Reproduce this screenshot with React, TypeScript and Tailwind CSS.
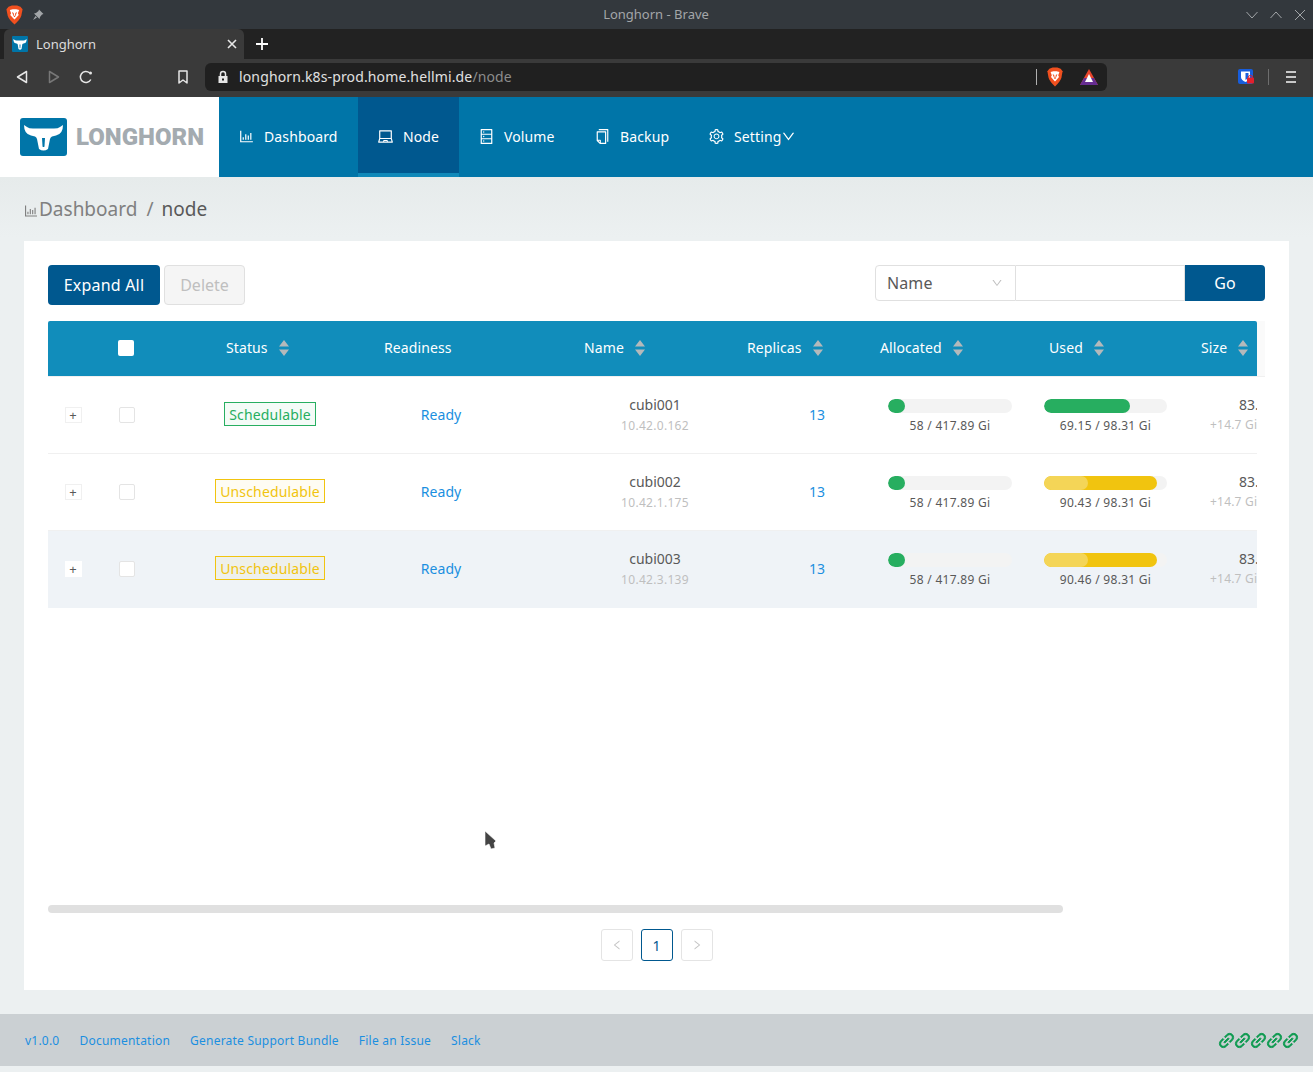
import {
  AiOutlineBarChart,
  AiOutlineLaptop,
  AiOutlineDatabase,
  AiOutlineCopy,
  AiOutlineSetting,
  AiOutlineDown,
  AiOutlineLink,
  AiOutlineLeft,
  AiOutlineRight,
} from 'react-icons/ai'

const BraveIcon = ({ className }: { className?: string }) => (
  <svg viewBox="0 0 20 24" preserveAspectRatio="none" className={className}>
    <path d="M3 2 L7 0.5 H13 L17 2 L19.5 5 L18 13 Q17 17 10 23.5 Q3 17 2 13 L0.5 5 Z" fill="#f1501f" />
    <path d="M4.5 6 L8 5 H12 L15.5 6 L14 10 L15 12 L11.5 16 L10 17.5 L8.5 16 L5 12 L6 10 Z" fill="#fff" />
    <path d="M7 8.5 L9 9.5 L9.5 13 L10.5 13 L11 9.5 L13 8.5 L12 11 L10.5 14.5 H9.5 L8 11 Z" fill="#f1501f" />
  </svg>
)

const BatIcon = () => (
  <svg viewBox="0 0 18 16" className="w-[18px] h-4">
    <path d="M9 0 L18 16 H0 Z" fill="#e8452c" />
    <path d="M0 16 L4 9 H14 L18 16 Z" fill="#662d91" />
    <path d="M9 5 L13 13 H5 Z" fill="#fff" />
  </svg>
)

const BitwardenIcon = () => (
  <svg viewBox="0 0 16 16" className="w-4 h-4">
    <rect width="15" height="15" rx="2" fill="#175ddc" />
    <path d="M3 2.5 H12 V8 Q12 11 7.5 13 Q3 11 3 8 Z" fill="#fff" />
    <path d="M7.5 4 H10.5 V8 Q10.5 9.5 7.5 11 Z" fill="#175ddc" />
    <rect x="9" y="8.5" width="7" height="6" rx="1" fill="#e2202c" />
    <path d="M10.5 8.5 V7.2 Q12.5 5.5 14.5 7.2 V8.5" fill="none" stroke="#e2202c" strokeWidth="1" />
  </svg>
)

const LonghornMark = ({ className }: { className?: string }) => (
  <svg viewBox="0 0 47 38" preserveAspectRatio="none" className={className}>
    <rect width="47" height="38" rx="3" fill="#0075a8" />
    <path d="M4 7 Q4 16 11 17.500 L15 18.500 Q16.500 19 17 21 L19 31 Q23.500 34 28 31 L30 21 Q30.500 19 32 18.500 L36 17.500 Q43 16 43 7 L40 9 Q38 10.500 34 10.500 H13 Q9 10.500 7 9 Z" fill="#fff" />
    <path d="M22 20 H25 L24.500 28.500 Q23.500 29.500 22.500 28.500 Z" fill="#0075a8" />
  </svg>
)

const SortIcon = () => (
  <svg viewBox="0 0 10 16" className="w-[10px] h-4 shrink-0">
    <path d="M5 0 L10 6.500 H0 Z M5 16 L0 9.500 H10 Z" fill="#b4b9bb" />
  </svg>
)

const BrowserChrome = () => (
  <div>
    {/* Title bar */}
    <div className="relative h-[29px] bg-[#33383d] flex items-center pl-[6px] pr-[7px]">
      <BraveIcon className="w-[17px] h-5" />
      <svg viewBox="0 0 12 12" className="w-3 h-3 ml-[9px]">
        <path d="M7 0.500 L11.500 5 L10 5.500 L8 8 L7.500 10 L2 4.500 L4 4 L6.500 2 Z M3.500 7 L1 11 L5 8.500 Z" fill="#a2a5a8" />
      </svg>
      <span className="flex-1 text-center text-[13px] text-[#a3a6a9] pl-[22px]">Longhorn - Brave</span>
      <div className="flex gap-[12px]">
        <svg viewBox="0 0 12 12" className="w-3 h-3" fill="none" stroke="#a2a5a8" strokeWidth="1"><path d="M0.500 3 L6 9 L11.500 3" /></svg>
        <svg viewBox="0 0 12 12" className="w-3 h-3" fill="none" stroke="#a2a5a8" strokeWidth="1"><path d="M0.500 9 L6 3 L11.500 9" /></svg>
        <svg viewBox="0 0 12 12" className="w-3 h-3" fill="none" stroke="#a2a5a8" strokeWidth="1"><path d="M1 1 L11 11 M11 1 L1 11" /></svg>
      </div>
    </div>
    {/* Tab strip */}
    <div className="h-[30px] bg-[#222222] flex items-end pl-1">
      <div className="w-[240px] h-[30px] bg-[#3a3a3a] rounded-t-md flex items-center pl-2 pr-[7px]">
        <LonghornMark className="w-4 h-4" />
        <span className="ml-2 pt-px text-[13px] text-[#dcdcdc] flex-1">Longhorn</span>
        <svg viewBox="0 0 10 10" className="w-[10px] h-[10px]" fill="none" stroke="#e8e8e8" strokeWidth="1.600"><path d="M1 1 L9 9 M9 1 L1 9" /></svg>
      </div>
      <div className="h-[30px] flex items-center ml-3">
        <svg viewBox="0 0 12 12" className="w-3 h-3" fill="none" stroke="#fff" strokeWidth="1.800"><path d="M6 0 V12 M0 6 H12" /></svg>
      </div>
    </div>
    {/* Toolbar */}
    <div className="h-[38px] bg-[#3a3a3a] flex items-center pb-[2px]">
      <div className="flex items-center pl-[16px] w-[205px]">
        <svg viewBox="0 0 12 14" className="w-3 h-[14px]" fill="none" stroke="#e6e6e6" strokeWidth="1.500"><path d="M10.500 1.500 V12.500 L1.500 7 Z" strokeLinejoin="round" /></svg>
        <svg viewBox="0 0 12 14" className="w-3 h-[14px] ml-5" fill="none" stroke="#777" strokeWidth="1.500"><path d="M1.500 1.500 V12.500 L10.500 7 Z" strokeLinejoin="round" /></svg>
        <svg viewBox="0 0 14 14" className="w-[14px] h-[14px] ml-[19px]" fill="none" stroke="#e6e6e6" strokeWidth="1.500"><path d="M11.800 9.500 A5.500 5.500 0 1 1 10.500 2.800" /><circle cx="11.500" cy="3" r="1.500" fill="#e6e6e6" stroke="none" /></svg>
        <svg viewBox="0 0 12 14" className="w-3 h-[14px] ml-[84px]" fill="none" stroke="#e6e6e6" strokeWidth="1.500"><path d="M2 1 H10 V13 L6 10 L2 13 Z" strokeLinejoin="round" /></svg>
      </div>
      <div className="w-[902px] h-7 bg-[#202020] rounded-md flex items-center pl-3 pr-[9px]">
        <svg viewBox="0 0 12 14" className="w-3 h-[14px]"><path d="M3.500 6 V4 A2.500 2.500 0 0 1 8.500 4 V6" fill="none" stroke="#e6e6e6" strokeWidth="1.500" /><path d="M1.500 6 H10.500 V13 H1.500 Z M5 8.500 V10.500 H7 V8.500 Z" fill="#e6e6e6" fillRule="evenodd" /></svg>
        <span className="ml-[10px] -mt-px text-[14px] tracking-[0.14px] text-[#e0e0e0] flex-1 whitespace-nowrap">
          longhorn.k8s-prod.home.hellmi.de<span className="text-[#8c8c8c]">/node</span>
        </span>
        <div className="w-px h-4 bg-[#b0b0b0]" />
        <BraveIcon className="w-4 h-5 ml-[10px]" />
        <div className="ml-[17px] flex items-center"><BatIcon /></div>
      </div>
      <div className="flex items-center flex-1 pl-[131px]">
        <BitwardenIcon />
        <div className="w-px h-4 bg-[#6e6e6e] ml-[14px]" />
        <svg viewBox="0 0 10 12" className="w-[10px] h-3 ml-[17px]" fill="#c8c8c8"><path d="M0 0 H10 V2 H0 Z M0 5 H10 V7 H0 Z M0 10 H10 V12 H0 Z" /></svg>
      </div>
    </div>
  </div>
)

const navItems = [
  { label: 'Dashboard', Icon: AiOutlineBarChart, w: 'w-[139px]' },
  { label: 'Node', Icon: AiOutlineLaptop, w: 'w-[101px]', active: true },
  { label: 'Volume', Icon: AiOutlineDatabase, w: 'w-[116px]' },
  { label: 'Backup', Icon: AiOutlineCopy, w: 'w-[114px]' },
]

const Header = () => (
  <div className="h-[80px] bg-[#0075a8] flex text-white text-[14px] tracking-[0.12px]">
    <div className="w-[219px] bg-white flex items-center pl-5 shrink-0">
      <LonghornMark className="w-[47px] h-[38px]" />
      <span className="ml-[9px] text-[24px] leading-none font-black tracking-[0px] text-[#a4abb0] font-['Roboto',sans-serif]">LONGHORN</span>
    </div>
    {navItems.map(({ label, Icon, w, active }) => (
      <div
        key={label}
        className={`${w} flex items-center pl-5 ${active ? 'bg-[#00588f] border-b-4 border-[#1089b9] pt-[2px]' : 'pb-[2px]'}`}
      >
        <Icon className="text-[17px] -ml-px mr-[9px]" />
        {label}
      </div>
    ))}
    <div className="flex items-center pl-5 pb-[2px]">
      <AiOutlineSetting className="text-[17px] -ml-px mr-[9px]" />
      Setting
      <AiOutlineDown className="text-[15px]" />
    </div>
  </div>
)

const headerCols = ['Status', 'Readiness', 'Name', 'Replicas', 'Allocated', 'Used', 'Size']

const nodes = [
  { status: 'Schedulable', name: 'cubi001', ip: '10.42.0.162', used: '69.15 / 98.31 Gi', usedW: 86, warn: false },
  { status: 'Unschedulable', name: 'cubi002', ip: '10.42.1.175', used: '90.43 / 98.31 Gi', usedW: 113, warn: true },
  { status: 'Unschedulable', name: 'cubi003', ip: '10.42.3.139', used: '90.46 / 98.31 Gi', usedW: 113, warn: true, hover: true },
]

const Bar = ({ children }: { children: React.ReactNode }) => (
  <div className="relative h-[14px] rounded-full bg-[#f3f3f3] overflow-hidden">{children}</div>
)

const Row = ({ node }: { node: (typeof nodes)[number] }) => (
  <div
    className={`grid grid-cols-[50px_112px_120px_222px_206px_118px_148px_162px_71px] items-center h-[77px] border-b border-[#f0f0f0] text-[#595959] ${node.hover ? 'bg-[#eff3f7] border-transparent' : ''}`}
  >
    <div className="flex justify-center">
      <div className={`w-[17px] h-4 bg-white border flex items-center justify-center text-[13px] leading-none ${node.hover ? 'border-white' : 'border-[#f0f0f0]'}`}>+</div>
    </div>
    <div className="pl-[21px]">
      <div className="w-4 h-4 bg-white border border-[#e4e4e4] rounded-[2px]" />
    </div>
    <div className="flex justify-center pb-[2px]">
      <span
        className={`h-6 px-1 border flex items-center text-[14px] tracking-[0.15px] whitespace-nowrap ${
          node.warn ? 'border-[#f1c40f] text-[#f1c40f] bg-[#f1c40f]/5' : 'border-[#27ae60] text-[#27ae60] bg-[#27ae60]/5'
        }`}
      >
        {node.status}
      </span>
    </div>
    <div className="text-center text-[14px] tracking-[0.1px] text-[#1b8fe0] pb-[2px]">Ready</div>
    <div className="text-center">
      <div className="text-[14px] leading-5">{node.name}</div>
      <div className="text-[12px] leading-5 mt-px tracking-[0.3px] text-[#bfbfbf]">{node.ip}</div>
    </div>
    <div className="text-center text-[14px] text-[#1b8fe0] pb-[2px]">13</div>
    <div className="px-3 pt-[5px]">
      <Bar><div className="absolute left-0 top-0 h-full w-[17px] rounded-full bg-[#27ae60]" /></Bar>
      <div className="text-center text-[12px] tracking-[0.28px] leading-5 mt-[3px]">58 / 417.89 Gi</div>
    </div>
    <div className="pl-5 pr-[19px] pt-[5px]">
      <Bar>
        {node.warn ? (
          <>
            <div className="absolute left-0 top-0 h-full rounded-full bg-[#f1c40f]" style={{ width: node.usedW }} />
            <div className="absolute left-0 top-0 h-full w-11 rounded-full bg-[#f4d557]" />
          </>
        ) : (
          <div className="absolute left-0 top-0 h-full rounded-full bg-[#27ae60]" style={{ width: node.usedW }} />
        )}
      </Bar>
      <div className="text-center text-[12px] tracking-[0.28px] leading-5 mt-[3px]">{node.used}</div>
    </div>
    <div className="overflow-hidden whitespace-nowrap">
      <div className="text-[14px] leading-5 pl-[53px]">83.61 Gi</div>
      <div className="text-[12px] leading-5 pl-6 tracking-[0.2px] text-[#bfbfbf]">+14.7 Gi</div>
    </div>
  </div>
)

const NodeTable = () => (
  <div>
    <div className="flex border-b border-[#f0f0f0]">
      <div className="w-[1209px] h-[55px] bg-[#118dbb] rounded-t-[2px] pl-[70px] pb-px grid grid-cols-[108px_158px_200px_163px_133px_169px_152px_56px] items-center text-white text-[14px] tracking-[0.1px]">
        <div className="w-4 h-4 bg-white rounded-[2px]" />
        {headerCols.map((col) => (
          <div key={col} className="flex items-center gap-[11px] whitespace-nowrap">
            <span className="-mt-px">{col}</span>
            {col !== 'Readiness' && <SortIcon />}
          </div>
        ))}
      </div>
      <div className="w-2 h-[55px] bg-[#fafafa]" />
    </div>
    <div className="w-[1209px]">
      {nodes.map((node) => (
        <Row key={node.name} node={node} />
      ))}
    </div>
  </div>
)

const footerLinks = ['v1.0.0', 'Documentation', 'Generate Support Bundle', 'File an Issue', 'Slack']

export default function App() {
  return (
    <div className="relative h-[1072px] w-[1313px] overflow-hidden flex flex-col bg-[#ecf0f1] font-['Noto_Sans',sans-serif]">
      <BrowserChrome />
      <Header />

      <div className="flex-1 flex flex-col bg-gradient-to-b from-[#e6ebeb] to-[#ecf0f1] to-[60px] px-6">
        {/* Breadcrumb */}
        <div className="h-[64px] flex items-center text-[19px] text-[#808080]">
          <AiOutlineBarChart className="text-[16px] mt-1 -ml-px" />
          Dashboard
          <span className="ml-[9px] mr-2">/</span>
          <span className="text-[#595959]">node</span>
        </div>

        {/* Card */}
        <div className="h-[749px] bg-white px-6 pt-6 flex flex-col">
          <div className="flex justify-between h-10 mb-4">
            <div className="flex gap-1">
              <button className="w-[112px] h-10 bg-[#00588f] text-white text-[16px] tracking-[0.2px] rounded-[4px]">Expand All</button>
              <button className="w-[81px] h-10 bg-[#f5f5f5] border border-[#e0e0e0] text-[#bfbfbf] text-[16px] rounded-[4px]">Delete</button>
            </div>
            <div className="flex h-9">
              <div className="w-[141px] border border-[#e0e0e0] rounded-l-[4px] flex items-center justify-between pl-[11px] pr-3 text-[16px] tracking-[0.1px] text-[#595959]">
                Name
                <AiOutlineDown className="text-[12px] text-[#bfbfbf]" />
              </div>
              <div className="w-[169px] border-y border-r border-[#e0e0e0]" />
              <button className="w-[80px] bg-[#00588f] text-white text-[16px] rounded-r-[4px]">Go</button>
            </div>
          </div>

          <NodeTable />

          <div className="flex-1 flex flex-col justify-end pb-[29px]">
            <div className="w-[1015px] h-2 rounded-full bg-[#e0e0e0] mb-4" />
            <div className="flex justify-center gap-2">
              <div className="w-8 h-8 rounded-[3px] border border-[#e4e4e4] flex items-center justify-center text-[#c4c4c4]">
                <AiOutlineLeft className="text-[12px]" />
              </div>
              <div className="w-8 h-8 rounded-[3px] border border-[#00588f] flex items-center justify-center text-[#00588f] text-[14px]">1</div>
              <div className="w-8 h-8 rounded-[3px] border border-[#e4e4e4] flex items-center justify-center text-[#c4c4c4]">
                <AiOutlineRight className="text-[12px]" />
              </div>
            </div>
          </div>
        </div>
      </div>

      {/* Footer */}
      <div className="h-[52px] mt-6 mb-[6px] bg-[#cbd0d3] flex items-center pl-[25px] pr-[15px] pt-px text-[12px] tracking-[0.22px] text-[#1b8fe0] gap-5">
        {footerLinks.map((link) => (
          <span key={link}>{link}</span>
        ))}
        <div className="ml-auto flex">
          {[0, 1, 2, 3, 4].map((i) => (
            <AiOutlineLink key={i} className="text-[19px] -mx-[1.5px] text-[#0e9a50]" stroke="currentColor" strokeWidth={50} />
          ))}
        </div>
      </div>

      {/* Mouse cursor */}
      <svg viewBox="0 0 13 20" className="absolute left-[484px] top-[830px] w-[13px] h-5">
        <path d="M1 1 V16 L5 14 L7 19 L11 18 L10 13 L12 11 Z" fill="#444" stroke="#fff" strokeWidth="0.600" />
      </svg>
    </div>
  )
}
